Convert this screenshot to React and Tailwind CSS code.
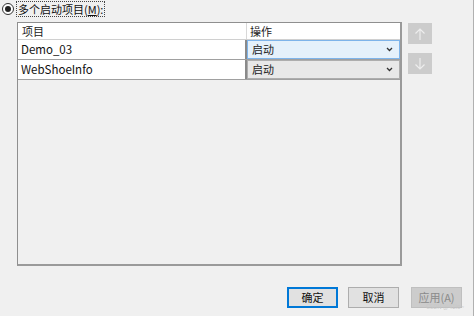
import React from 'react';

const font = { fontFamily: '"Noto Sans CJK SC", "Noto Sans", sans-serif' };

const Chevron = () => (
  <svg width="7" height="5" viewBox="0 0 7 5" className="shrink-0">
    <path d="M1 1 L3.5 3.5 L6 1" fill="none" stroke="#333" strokeWidth="1.3" />
  </svg>
);

const ArrowBtn = ({ dir }) => (
  <div className="w-[24px] h-[21px] bg-[#cccccc] flex items-center justify-center">
    <svg width="12" height="14" viewBox="0 0 12 14">
      {dir === 'up' ? (
        <path d="M6 13 V2 M1.5 6.5 L6 2 L10.5 6.5" fill="none" stroke="#ededed" strokeWidth="1.2" />
      ) : (
        <path d="M6 1 V12 M1.5 7.5 L6 12 L10.5 7.5" fill="none" stroke="#ededed" strokeWidth="1.2" />
      )}
    </svg>
  </div>
);

const Row = ({ name, active }) => (
  <div className="flex h-[20px] bg-white border-b border-[#a0a0a0]">
    <div className="w-[229px] pl-[3px] flex items-center text-[11.5px] text-[#111] border-r-[2px] border-[#8a8a8a]">
      {name}
    </div>
    <div
      className={
        active
          ? 'flex-1 flex items-center justify-between pl-[4px] pr-[6px] bg-[#e5f1fb] border border-[#7eb4ea]'
          : 'flex-1 flex items-center justify-between pl-[4px] pr-[6px] bg-[#e8e8e8] border border-[#adadad]'
      }
    >
      <span className="text-[11px] text-[#222]">启动</span>
      <Chevron />
    </div>
  </div>
);

export default function App() {
  return (
    <div className="w-[474px] h-[316px] bg-[#f0f0f0] relative flex flex-col overflow-hidden border-r border-[#b0b0b0]" style={font}>
      {/* radio line */}
      <div className="flex items-center h-[17px] pl-[2px] pt-[1px]">
        <div className="w-[12px] h-[12px] rounded-full border border-[#333] bg-white flex items-center justify-center">
          <div className="w-[6px] h-[6px] rounded-full bg-[#222]" />
        </div>
        <div className="ml-[2px] px-[1px] h-[16px] flex items-center border border-dotted border-[#444] text-[11px] text-[#111]">
          多个启动项目(<span className="underline">M</span>):
        </div>
      </div>

      <div className="flex mt-[5px] pl-[17px]">
        {/* table */}
        <div className="w-[385px] h-[244px] border border-[#8f8f8f] border-r-[2px] border-b-[2px] border-r-[#9a9a9a] border-b-[#9a9a9a] bg-[#f0f0f0] flex flex-col">
          <div className="flex h-[17px] bg-white border-b border-[#d0d0d0]">
            <div className="w-[229px] pl-[4px] flex items-center text-[11px] text-[#222] border-r border-[#d8d8d8]">项目</div>
            <div className="flex-1 pl-[3px] flex items-center text-[11px] text-[#222]">操作</div>
          </div>
          <Row name="Demo_03" active />
          <Row name="WebShoeInfo" />
        </div>

        {/* up/down */}
        <div className="flex flex-col gap-[9px] ml-[6px] mt-[1px]">
          <ArrowBtn dir="up" />
          <ArrowBtn dir="down" />
        </div>
      </div>

      {/* bottom buttons */}
      <div className="flex justify-end gap-[10px] pr-[11px] mt-[21px]">
        <button className="w-[51px] h-[21px] bg-[#e1e1e1] border-[2px] border-[#0078d7] text-[11px] text-[#111] flex items-center justify-center">
          确定
        </button>
        <button className="w-[51px] h-[21px] bg-[#e1e1e1] border border-[#adadad] text-[11px] text-[#111] flex items-center justify-center">
          取消
        </button>
        <button className="w-[51px] h-[21px] ml-[2px] bg-[#cccccc] border border-[#bfbfbf] text-[11px] text-[#8a8a8a] flex items-center justify-center">
          应用(A)
        </button>
      </div>

      <div className="absolute right-[9px] bottom-[6px] text-[6px] text-[#c8c8c8] leading-none">CSDN @41lo~</div>
    </div>
  );
}
